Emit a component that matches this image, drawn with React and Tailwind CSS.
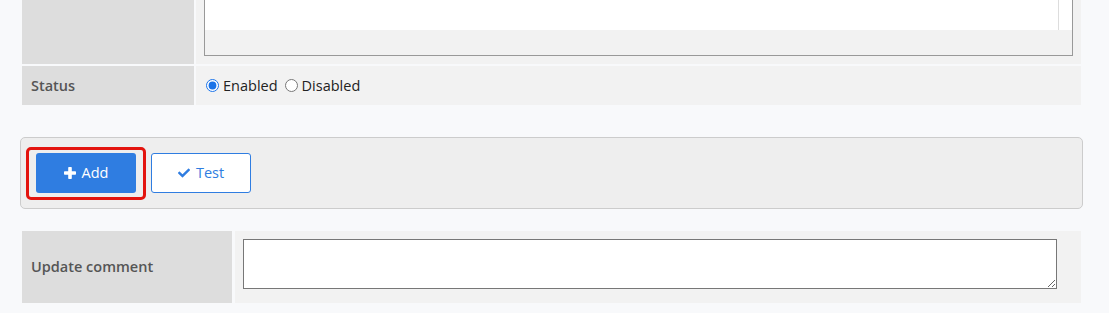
import { FaCheck } from 'react-icons/fa'

const font = { fontFamily: '"Open Sans", "Liberation Sans", sans-serif' }

const PlusIcon = () => (
    <svg width="12" height="12" viewBox="0 0 12 12" fill="currentColor">
        <rect x="4.2" y="0" width="3.6" height="12" rx="0.8" />
        <rect x="0" y="4.2" width="12" height="3.6" rx="0.8" />
    </svg>
)

export default function App() {
    return (
        <div className="min-h-screen overflow-hidden bg-[#f8f9fb] px-[20px]" style={font}>
            <div className="w-[1063px]">
                <div className="-mt-[79px] flex flex-col gap-[2px] px-[2px] pb-[2px]">
                    <div className="flex gap-[2px]">
                        <div className="w-[172px] bg-[#dddddd]"></div>
                        <div className="flex-1 bg-[#f2f2f2] p-[8px]">
                            <div className="w-[869px] border border-[#999999] bg-[#f2f2f2]">
                                <div className="flex h-[100px] bg-white">
                                    <div className="flex-1 border-r border-[#dddddd]"></div>
                                    <div className="w-[13px]"></div>
                                </div>
                                <div className="h-[25px]"></div>
                            </div>
                        </div>
                    </div>
                    <div className="flex h-[39px] gap-[2px]">
                        <div className="flex w-[172px] items-center bg-[#dddddd] px-[9px] text-[14.5px] font-semibold text-[#555555]">
                            Status
                        </div>
                        <div className="flex flex-1 items-center bg-[#f2f2f2] px-[10px] text-[14.5px] text-[#222222]">
                            <label className="flex items-center gap-[4px]">
                                <input type="radio" name="status" defaultChecked className="m-0 h-[13px] w-[13px] accent-[#1a73e8]" />
                                Enabled
                            </label>
                            <label className="ml-[7px] flex items-center gap-[4px]">
                                <input type="radio" name="status" className="m-0 h-[13px] w-[13px]" />
                                Disabled
                            </label>
                        </div>
                    </div>
                </div>

                <div className="mt-[30px] flex gap-[15px] rounded-[5px] border border-[#cccccc] bg-[#eeeeee] p-[15px]">
                    <div className="relative">
                        <div className="pointer-events-none absolute -bottom-[7px] -left-[10px] -right-[10px] -top-[6px] rounded-[5px] border-[3px] border-[#e3140e]"></div>
                        <button className="flex h-[40px] w-[100px] items-center justify-center gap-[6px] rounded-[3px] bg-[#2f7de1] text-[14.5px] font-medium text-white">
                            <PlusIcon />
                            Add
                        </button>
                    </div>
                    <button className="flex h-[40px] w-[100px] items-center justify-center gap-[6px] rounded-[3px] border border-[#2f7de1] bg-white text-[14.5px] text-[#2f7de1]">
                        <FaCheck className="h-[12px] w-[12px]" />
                        Test
                    </button>
                </div>

                <div className="mt-[20px] flex gap-[3px] p-[2px]">
                    <div className="flex w-[210px] items-center bg-[#dddddd] px-[9px] text-[14.5px] font-semibold text-[#555555]">
                        Update comment
                    </div>
                    <div className="flex-1 bg-[#f2f2f2] pb-[14px] pl-[8px] pt-[8px]">
                        <textarea className="block h-[50px] w-[814px] resize-y border border-[#777777] bg-white"></textarea>
                    </div>
                </div>
            </div>
        </div>
    )
}
